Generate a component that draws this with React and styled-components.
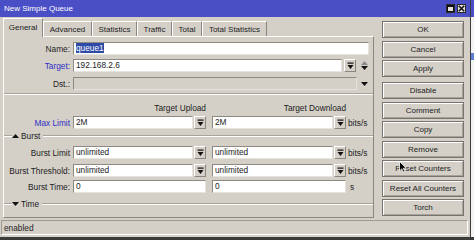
import styled, { createGlobalStyle } from "styled-components";

const Global = createGlobalStyle`
  html, body { margin: 0; padding: 0; }
  body {
    font-family: "Liberation Sans", Arial, sans-serif;
    background: #d4d0c8;
    color: #1c1c1c;
  }
  * { box-sizing: border-box; }
`;

const Screen = styled.div`
  position: relative;
  width: 474px;
  height: 240px;
  display: flex;
  flex-direction: column;
  overflow: hidden;
`;
const Top = styled.div`
  display: flex;
  height: 237px;
`;
const Window = styled.div`
  width: 471px;
  border-right: 1px solid #3c3c3c;
  background: #d4d0c8;
  display: flex;
  flex-direction: column;
`;
const TitleBar = styled.div`
  height: 17px;
  background: #4b4fc6;
  display: flex;
  align-items: center;
  padding: 0 4px 0 4px;
  color: #fff;
  font-size: 8px;
`;
const Controls = styled.div`
  margin-left: auto;
  display: flex;
  gap: 2px;
`;
const CtlBox = styled.div`
  width: 9px;
  height: 9px;
  background: #e4e2dc;
  border: 1px solid #2a2a2a;
  display: flex;
  align-items: center;
  justify-content: center;
`;
const Main = styled.div`
  display: flex;
  height: 202px;
`;
const LeftPane = styled.div`
  width: 377px;
  padding-left: 3px;
  display: flex;
  flex-direction: column;
`;
const Tabs = styled.div`
  display: flex;
  align-items: flex-end;
  height: 19px;
  position: relative;
  z-index: 1;
`;
const Tab = styled.div`
  width: ${(p) => p.$w}px;
  height: ${(p) => (p.$active ? 19 : 15)}px;
  margin-bottom: ${(p) => (p.$active ? -1 : 0)}px;
  background: #d4d0c8;
  border-top: 1px solid #fff;
  border-left: 1px solid #fff;
  border-right: 1px solid #8a8680;
  font-size: 8px;
  display: flex;
  align-items: center;
  justify-content: center;
  padding-bottom: ${(p) => (p.$active ? 2 : 0)}px;
`;
const Panel = styled.div`
  width: 371px;
  height: 182px;
  border-top: 1px solid #fff;
  border-left: 1px solid #fff;
  border-right: 1px solid #8a8680;
  border-bottom: 1px solid #8a8680;
  padding: 5px 4px 0 0;
  display: flex;
  flex-direction: column;
`;
const Row = styled.div`
  display: flex;
  align-items: center;
  height: 13px;
  margin-top: ${(p) => p.$mt || 0}px;
  font-size: 8.3px;
`;
const Label = styled.div`
  width: 69px;
  padding-right: 3px;
  text-align: right;
  white-space: nowrap;
  color: ${(p) => (p.$blue ? "#2f2fc4" : "#1c1c1c")};
`;
const Input = styled.div`
  width: ${(p) => p.$w}px;
  height: 13px;
  background: ${(p) => (p.$off ? "#d4d0c8" : "#fff")};
  border: 1px solid;
  border-color: #8e8a82 #e6e4de #e6e4de #8e8a82;
  padding: 0 2px;
  line-height: 11px;
  white-space: nowrap;
  overflow: hidden;
`;
const Selected = styled.span`
  background: #2f4ba8;
  color: #fff;
`;
const DropBtn = styled.div`
  width: 12px;
  height: 13px;
  margin-left: ${(p) => p.$ml ?? 1}px;
  background: #d4d0c8;
  border: 1px solid;
  border-color: #fff #8a8680 #8a8680 #fff;
  display: flex;
  align-items: center;
  justify-content: center;
`;
const Arrows = styled.div`
  margin-left: ${(p) => p.$ml}px;
  width: 8px;
  display: flex;
  flex-direction: column;
  align-items: center;
  gap: 1px;
`;
const Unit = styled.div`
  padding-left: ${(p) => p.$pl ?? 2}px;
  white-space: nowrap;
`;
const Gap = styled.div`
  width: ${(p) => p.$w}px;
`;
const Head = styled.div`
  width: ${(p) => p.$w}px;
  text-align: right;
  white-space: nowrap;
`;
const Etched = styled.div`
  height: 2px;
  border-top: 1px solid #a8a49c;
  border-bottom: 1px solid #fff;
  flex: ${(p) => (p.$w ? "none" : 1)};
  width: ${(p) => (p.$w ? `${p.$w}px` : "auto")};
`;
const Divider = styled(Etched)`
  margin-top: 3px;
  margin-right: -4px;
  flex: none;
  width: auto;
`;
const Section = styled(Row)`
  margin-right: -4px;
`;
const SectionText = styled.div`
  margin: 0 3px 0 2px;
`;
const Side = styled.div`
  padding: 4px 0 0 5px;
  display: flex;
  flex-direction: column;
  gap: 2.5px;
`;
const Button = styled.div`
  width: 82px;
  height: 17px;
  margin-top: ${(p) => (p.$sep ? 2.5 : 0)}px;
  background: #d4d0c8;
  border: 1px solid #77746e;
  box-shadow: inset 1px 1px 0 #fff, inset -1px -1px 0 #a7a39b;
  font-size: 8px;
  display: flex;
  align-items: center;
  justify-content: center;
  color: #222;
  white-space: nowrap;
`;
const StatusBar = styled.div`
  height: 18px;
  padding: 1px 2px 2px 1px;
`;
const StatusField = styled.div`
  height: 15px;
  border: 1px solid;
  border-color: #a09c94 #fff #fff #a09c94;
  font-size: 8.3px;
  padding-left: 2px;
  display: flex;
  align-items: center;
`;
const Outside = styled.div`
  width: 3px;
  display: flex;
  flex-direction: column;
  background: #f4f4f4;
`;
const OutsideBlock = styled.div`
  height: ${(p) => p.$h}px;
  margin-top: ${(p) => p.$mt || 0}px;
  background: ${(p) => p.$bg};
`;
const Taskbar = styled.div`
  height: 3px;
  background: #3b3b3b;
`;
const Cursor = styled.svg`
  position: absolute;
  left: 399px;
  top: 161px;
`;

const DropIcon = () => (
  <svg width="7" height="8" viewBox="0 0 7 8">
    <rect x="0.5" y="0.5" width="6" height="1.2" fill="#111" />
    <path d="M0.5 3 L6.5 3 L3.5 7 Z" fill="#111" />
  </svg>
);
const Tri = ({ up, color = "#111" }) => (
  <svg width="7" height="4" viewBox="0 0 7 4">
    <path d={up ? "M0 4 L7 4 L3.5 0 Z" : "M0 0 L7 0 L3.5 4 Z"} fill={color} />
  </svg>
);

const LimitRow = ({ label, blue, mt, a, b }) => (
  <Row $mt={mt}>
    <Label $blue={blue}>{label}</Label>
    <Input $w={120}>{a}</Input>
    <DropBtn>
      <DropIcon />
    </DropBtn>
    <Gap $w={6} />
    <Input $w={121}>{b}</Input>
    <DropBtn>
      <DropIcon />
    </DropBtn>
    <Unit>bits/s</Unit>
  </Row>
);

const SectionHead = ({ title, open, mt }) => (
  <Section $mt={mt}>
    <Etched $w={8} />
    <Tri up={open} />
    <SectionText>{title}</SectionText>
    <Etched />
  </Section>
);

const tabs = [
  ["General", 40],
  ["Advanced", 49],
  ["Statistics", 45],
  ["Traffic", 35],
  ["Total", 30],
  ["Total Statistics", 65],
];

const buttons = [
  "OK",
  "Cancel",
  "Apply",
  "Disable",
  "Comment",
  "Copy",
  "Remove",
  "Reset Counters",
  "Reset All Counters",
  "Torch",
];

export default function App() {
  return (
    <Screen>
      <Global />
      <Top>
        <Window>
          <TitleBar>
            New Simple Queue
            <Controls>
              <CtlBox>
                <svg width="7" height="7" viewBox="0 0 7 7">
                  <rect x="0.5" y="0.5" width="6" height="6" fill="none" stroke="#111" />
                  <rect x="0.5" y="0.5" width="6" height="1.5" fill="#111" />
                </svg>
              </CtlBox>
              <CtlBox>
                <svg width="7" height="7" viewBox="0 0 7 7">
                  <path d="M0.8 0.8 L6.2 6.2 M6.2 0.8 L0.8 6.2" stroke="#111" strokeWidth="1.6" />
                </svg>
              </CtlBox>
            </Controls>
          </TitleBar>
          <Main>
            <LeftPane>
              <Tabs>
                {tabs.map(([t, w], i) => (
                  <Tab key={t} $w={w} $active={i === 0}>
                    {t}
                  </Tab>
                ))}
              </Tabs>
              <Panel>
                <Row>
                  <Label>Name:</Label>
                  <Input $w={296}>
                    <Selected>queue1</Selected>
                  </Input>
                </Row>
                <Row $mt={4}>
                  <Label $blue>Target:</Label>
                  <Input $w={269}>192.168.2.6</Input>
                  <DropBtn $ml={2}>
                    <DropIcon />
                  </DropBtn>
                  <Arrows $ml={4}>
                    <Tri up color="#8a8a8a" />
                    <Tri />
                  </Arrows>
                </Row>
                <Row $mt={5}>
                  <Label>Dst.:</Label>
                  <Input $w={284} $off />
                  <Arrows $ml={3}>
                    <Tri />
                  </Arrows>
                </Row>
                <Divider />
                <Row $mt={6}>
                  <Gap $w={69} />
                  <Head $w={133}>Target Upload</Head>
                  <Gap $w={6} />
                  <Head $w={134}>Target Download</Head>
                </Row>
                <LimitRow label="Max Limit" blue mt={2} a="2M" b="2M" />
                <SectionHead title="Burst" open />
                <LimitRow label="Burst Limit" mt={4} a="unlimited" b="unlimited" />
                <LimitRow label="Burst Threshold:" mt={5} a="unlimited" b="unlimited" />
                <Row $mt={3}>
                  <Label>Burst Time:</Label>
                  <Input $w={133}>0</Input>
                  <Gap $w={6} />
                  <Input $w={134}>0</Input>
                  <Unit $pl={4}>s</Unit>
                </Row>
                <SectionHead title="Time" mt={4} />
              </Panel>
            </LeftPane>
            <Side>
              {buttons.map((b) => (
                <Button key={b} $sep={b === "Disable"}>
                  {b}
                </Button>
              ))}
            </Side>
          </Main>
          <StatusBar>
            <StatusField>enabled</StatusField>
          </StatusBar>
        </Window>
        <Outside>
          <OutsideBlock $h={17} $bg="#4b4fc6" />
          <OutsideBlock $h={7} $mt={36} $bg="#5a7fd0" />
        </Outside>
      </Top>
      <Taskbar />
      <Cursor width="8" height="12" viewBox="0 0 8 12">
        <path d="M0.5 0.5 L0.5 10 L2.8 7.8 L4.5 11.3 L5.9 10.6 L4.3 7.2 L7.3 7.2 Z" fill="#000" stroke="#fff" strokeWidth="0.8" />
      </Cursor>
    </Screen>
  );
}
